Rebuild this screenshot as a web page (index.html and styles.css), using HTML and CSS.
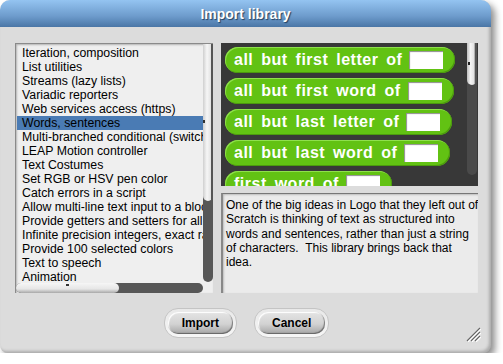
FILE: index.html
```html
<!DOCTYPE html>
<html>
<head>
<meta charset="utf-8">
<link rel="stylesheet" href="styles.css">
</head>
<body>
<div class="dialog">
  <div class="title">Import library</div>
  <div class="body">
    <div class="main">
      <div class="list">
        <div class="items">
          <div class="item">Iteration, composition</div>
          <div class="item">List utilities</div>
          <div class="item">Streams (lazy lists)</div>
          <div class="item">Variadic reporters</div>
          <div class="item">Web services access (https)</div>
          <div class="item sel">Words, sentences</div>
          <div class="item">Multi-branched conditional (switch)</div>
          <div class="item">LEAP Motion controller</div>
          <div class="item">Text Costumes</div>
          <div class="item">Set RGB or HSV pen color</div>
          <div class="item">Catch errors in a script</div>
          <div class="item">Allow multi-line text input to a block</div>
          <div class="item">Provide getters and setters for all GUI-controlled global settings</div>
          <div class="item">Infinite precision integers, exact rationals, complex</div>
          <div class="item">Provide 100 selected colors</div>
          <div class="item">Text to speech</div>
          <div class="item">Animation</div>
          <div class="item">Pixels</div>
        </div>
        <div class="vscroll"><div class="vthumb"><span class="vgrip"></span></div></div>
        <div class="hscroll"><div class="hthumb"><span class="hgrip"></span></div></div>
      </div>
      <div class="right">
        <div class="palette">
          <div class="blocks">
            <div class="block"><span class="label">all but first letter of</span><span class="slot"></span></div>
            <div class="block"><span class="label">all but first word of</span><span class="slot"></span></div>
            <div class="block"><span class="label">all but last letter of</span><span class="slot"></span></div>
            <div class="block"><span class="label">all but last word of</span><span class="slot"></span></div>
            <div class="block"><span class="label">first word of</span><span class="slot"></span></div>
          </div>
          <div class="pscroll"><div class="pthumb"><span class="pgrip"></span></div></div>
        </div>
        <div class="desc">One of the big ideas in Logo that they left out of<br>Scratch is thinking of text as structured into<br>words and sentences, rather than just a string<br>of characters.&nbsp; This library brings back that<br>idea.</div>
      </div>
    </div>
    <div class="buttons">
      <button class="btn"><span class="face">Import</span></button>
      <button class="btn"><span class="face">Cancel</span></button>
    </div>
    <svg class="resize" width="15" height="15" viewBox="0 0 15 15">
      <g stroke-width="1.2">
        <line x1="1" y1="14" x2="14" y2="1" stroke="#666"/>
        <line x1="2" y1="15" x2="15" y2="2" stroke="#fff"/>
        <line x1="5" y1="14" x2="14" y2="5" stroke="#666"/>
        <line x1="6" y1="15" x2="15" y2="6" stroke="#fff"/>
        <line x1="9" y1="14" x2="14" y2="9" stroke="#666"/>
        <line x1="10" y1="15" x2="15" y2="10" stroke="#fff"/>
      </g>
    </svg>
  </div>
</div>
</body>
</html>
```

FILE: styles.css
```css
html, body {
  margin: 0;
  padding: 0;
  background: #ffffff;
  font-family: "Liberation Sans", Arial, Helvetica, sans-serif;
}

.dialog {
  width: 491px;
  height: 353px;
  background: #dcdcdc;
  border-radius: 10px 10px 8px 8px;
  box-shadow: 4px 4px 7px rgba(0, 0, 0, 0.45), inset -2px -2px 3px rgba(0, 0, 0, 0.22);
  display: flex;
  flex-direction: column;
  overflow: hidden;
}

.title {
  height: 27px;
  flex: none;
  background: linear-gradient(#94c4f1, #6d9bcc 60%, #4a76a6);
  color: #ffffff;
  font-weight: bold;
  font-size: 14px;
  line-height: 28px;
  text-align: center;
  text-shadow: 1px 1px 1px #23405f;
}

.body {
  flex: 1;
  position: relative;
  padding: 16px 13px 0 15px;
  display: flex;
  flex-direction: column;
}

.main {
  display: flex;
  gap: 8px;
  height: 250px;
}

.list {
  width: 197px;
  position: relative;
  background: #efefef;
  border-top: 1px solid #8a8a8a;
  border-left: 1px solid #8a8a8a;
  box-shadow: inset 1px 1px 2px rgba(0, 0, 0, 0.25);
  overflow: hidden;
}

.items {
  padding: 2px 0 0 1px;
  width: 186px;
  overflow: hidden;
  font-size: 12.3px;
  line-height: 14px;
  color: #000;
}

.item {
  padding-left: 5px;
  white-space: nowrap;
}

.item.sel {
  background: #4a7bb4;
}

.vscroll {
  position: absolute;
  right: 0;
  top: 0;
  width: 10px;
  height: 238px;
  background: #575757;
  border-radius: 0 0 5px 5px;
}

.vthumb {
  height: 157px;
  background: linear-gradient(90deg, #cfcfcf, #f6f6f6 40%, #e4e4e4 75%, #555 85%);
  border-radius: 0 0 5px 5px;
  position: relative;
}

.vgrip {
  position: absolute;
  left: 0;
  top: 76px;
  width: 2px;
  height: 3px;
  background: #333;
}

.hscroll {
  position: absolute;
  left: 0;
  bottom: 0;
  width: 187px;
  height: 10px;
  background: #575757;
  border-radius: 5px;
}

.hthumb {
  width: 103px;
  height: 10px;
  background: linear-gradient(#f6f6f6, #e6e6e6 60%, #a8a8a8);
  border-radius: 5px;
  position: relative;
}

.hgrip {
  position: absolute;
  left: 50px;
  top: 1px;
  width: 3px;
  height: 2px;
  background: #333;
}

.right {
  width: 257px;
  display: flex;
  flex-direction: column;
  gap: 7px;
}

.palette {
  height: 143px;
  flex: none;
  background: #383838;
  position: relative;
  overflow: hidden;
}

.blocks {
  padding: 4px;
  display: flex;
  flex-direction: column;
  align-items: flex-start;
  gap: 5px;
}

.block {
  height: 26px;
  flex: none;
  box-sizing: border-box;
  border-radius: 13px;
  background: #62c213;
  display: flex;
  align-items: center;
  gap: 7px;
  padding: 0 12px 0 9px;
  box-shadow: inset 1px 1px 0 #8fe04c, inset -1px -1px 0 #4c9a0e;
}

.label {
  color: #ffffff;
  font-weight: bold;
  font-size: 16px;
  letter-spacing: 0.5px;
  word-spacing: 3px;
  white-space: nowrap;
}

.slot {
  width: 34px;
  height: 18px;
  background: #ffffff;
  box-shadow: inset 1px 1px 1px rgba(0, 0, 0, 0.45);
}

.pscroll {
  position: absolute;
  right: 1px;
  top: 0;
  width: 10px;
  height: 132px;
  background: #4a4a4a;
  border-radius: 0 0 5px 5px;
}

.pthumb {
  height: 42px;
  background: linear-gradient(90deg, #bdbdbd, #f4f4f4 35%, #e2e2e2 70%, #555 85%);
  border-radius: 0 0 5px 5px;
  position: relative;
}

.pgrip {
  position: absolute;
  left: 1px;
  top: 19px;
  width: 2px;
  height: 3px;
  background: #222;
}

.desc {
  flex: 1;
  background: #ebebeb;
  border-top: 1px solid #777;
  border-left: 2px solid #888;
  box-shadow: inset 1px 1px 2px rgba(0, 0, 0, 0.2);
  padding: 4px 3px;
  font-size: 12px;
  line-height: 14.3px;
  color: #000;
  white-space: nowrap;
  overflow: hidden;
}

.buttons {
  display: flex;
  justify-content: center;
  gap: 17px;
  margin-top: 15px;
}

.btn {
  height: 30px;
  padding: 3px;
  margin: 0;
  border: 1px solid #c4c4c4;
  border-radius: 14px;
  background: linear-gradient(#e8e8e8, #f6f6f6);
  font-family: "Liberation Sans", Arial, sans-serif;
  font-weight: bold;
  font-size: 12px;
  color: #000;
  box-sizing: border-box;
}

.face {
  display: flex;
  align-items: center;
  justify-content: center;
  height: 100%;
  padding: 0 14px;
  border-radius: 10px;
  background: linear-gradient(#e4e4e4, #d2d2d2 55%, #a4a4a4);
  box-shadow: inset -1px -1px 1px rgba(0, 0, 0, 0.4), inset 1px 1px 1px #ffffff;
}

.resize {
  position: absolute;
  right: 10px;
  bottom: 11px;
}
```
